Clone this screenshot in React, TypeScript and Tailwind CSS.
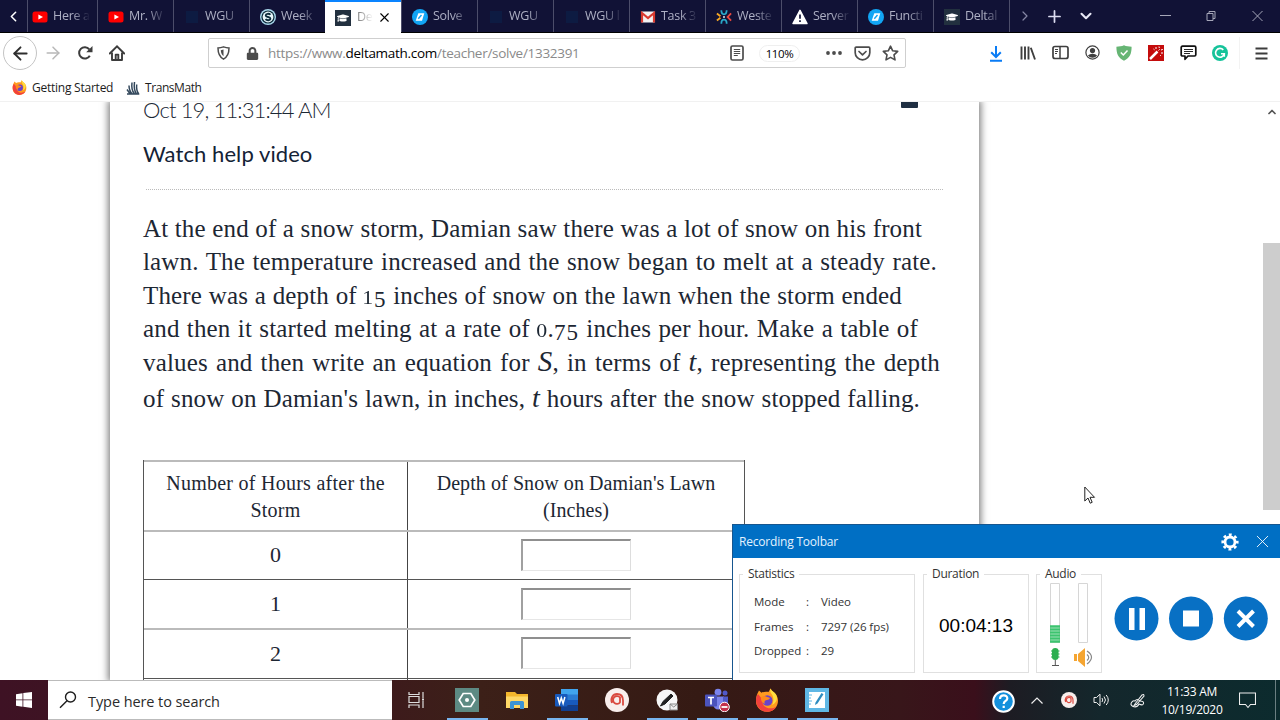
import React from 'react';
import { ArrowLeft, ArrowRight, ChevronDown, ChevronLeft, ChevronRight, ChevronUp, Plus, X } from 'lucide-react';
import { FaGraduationCap, FaLock } from 'react-icons/fa';

interface Tab {
  title: string;
  icon: string;
  active?: boolean;
}

const TABS: Tab[] = [
  { title: 'Here a', icon: 'youtube' },
  { title: 'Mr. W', icon: 'youtube' },
  { title: 'WGU', icon: 'wgu' },
  { title: 'Week', icon: 'schoology' },
  { title: 'De', icon: 'delta', active: true },
  { title: 'Solve', icon: 'nearpod' },
  { title: 'WGU', icon: 'wgu' },
  { title: 'WGU l', icon: 'wgu' },
  { title: 'Task 3', icon: 'gmail' },
  { title: 'Weste', icon: 'western' },
  { title: 'Server', icon: 'warn' },
  { title: 'Functi', icon: 'nearpod' },
  { title: 'Deltal', icon: 'delta' },
];

const TabIcon = ({ name }: { name: string }) => {
  switch (name) {
    case 'youtube':
      return (
        <svg width="16" height="16" viewBox="0 0 16 16">
          <rect x="0.5" y="2.5" width="15" height="11" rx="2.5" fill="#f00" />
          <path d="M6.4 5.4v5.2L11 8z" fill="#fff" />
        </svg>
      );
    case 'schoology':
      return (
        <svg width="16" height="16" viewBox="0 0 16 16">
          <circle cx="8" cy="8" r="8" fill="#a9d8ec" />
          <circle cx="8" cy="8" r="6.6" fill="#0b2a3a" />
          <circle cx="8" cy="8" r="5.4" fill="#e8f6fb" />
          <path d="M10.4 5.8C9.2 4.2 5.700 4.500 5.700 6.400c0 2.100 4.700 1.100 4.700 3.200 0 2.100-3.600 2.100-4.900.600" fill="none" stroke="#0b2a3a" strokeWidth="1.800" />
        </svg>
      );
    case 'nearpod':
      return (
        <svg width="16" height="16" viewBox="0 0 16 16">
          <circle cx="8" cy="8" r="8" fill="#12a5f4" />
          <path d="M6.300 4.300h6L10 11.700H3.700z" fill="#fff" />
          <path d="M6.300 9.700l3.200-3.600" stroke="#12a5f4" strokeWidth="1.500" />
        </svg>
      );
    case 'gmail':
      return (
        <svg width="16" height="16" viewBox="0 0 16 16">
          <rect x="1" y="2.500" width="14" height="11" rx="1" fill="#f4f2f2" />
          <path d="M2 13.500V4l6 5 6-5v9.500" fill="none" stroke="#d93a2f" strokeWidth="2.200" />
        </svg>
      );
    case 'western':
      return (
        <svg width="18" height="18" viewBox="0 0 18 18" fill="none" strokeWidth="2">
          <path d="M1 5l4 3.200M1 13l4-3.200" stroke="#f5a623" />
          <path d="M17 5l-4 4 4 4" stroke="#e8483f" />
          <path d="M6 1.500C6 4 7 6 9 6s3-2 3-4.500" stroke="#29a9c9" />
          <path d="M6 16.500C6 14 7 12 9 12s3 2 3 4.500" stroke="#29a9c9" />
          <circle cx="9" cy="9" r="1" fill="#fff" />
        </svg>
      );
    case 'warn':
      return (
        <svg width="16" height="16" viewBox="0 0 16 16">
          <path d="M8 1.300L15 14.500H1z" fill="#fff" stroke="#fff" strokeWidth="1.500" strokeLinejoin="round" />
          <path d="M8 5.500v4.300M8 11.300v1.700" stroke="#111236" strokeWidth="1.700" />
        </svg>
      );
    case 'delta':
      return (
        <span className="flex h-4 w-4 items-center justify-center bg-[#22303f] text-white">
          <FaGraduationCap size={12} />
        </span>
      );
    default:
      return <span className="h-3 w-3 bg-[#0d1b42]" />;
  }
};

const TabStrip = () => (
  <div className="flex h-[33px] border-b border-black bg-[#111236] text-[#aeb0c4]">
    <div className="flex w-[27px] items-center justify-center">
      <ChevronLeft size={17} strokeWidth={2.2} className="text-white" />
    </div>
    {TABS.map((tab, i) => (
      <div
        key={i}
        className={
          tab.active
            ? 'flex h-[33px] w-[76px] shrink-0 items-center border-t-2 border-[#0a84ff] bg-white pl-[10px] text-[#777]'
            : i === 0
              ? 'flex w-[70px] shrink-0 items-center border-l border-[#4c4d6a] pt-px pl-1'
              : 'flex w-[76px] shrink-0 items-center border-l border-[#4c4d6a] pt-px pl-[10px]'
        }
      >
        <span className="flex w-[16px] shrink-0 justify-center">
          <TabIcon name={tab.icon} />
        </span>
        <span
          className={
            tab.active
              ? 'ml-[6px] w-[16px] text-[12.500px] tracking-[-0.3px] whitespace-nowrap [mask-image:linear-gradient(to_right,black_0%,transparent_100%)]'
              : 'ml-[5px] w-[38px] text-[12.500px] tracking-[-0.3px] whitespace-nowrap [mask-image:linear-gradient(to_right,black_50%,transparent_98%)]'
          }
        >
          {tab.title}
        </span>
        {tab.active && <X size={15} strokeWidth={1.8} className="ml-[4px] text-black" />}
      </div>
    ))}
    <div className="flex w-[30px] items-center justify-center border-l border-[#4c4d6a]">
      <ChevronRight size={16} strokeWidth={1.8} className="text-[#8587a5]" />
    </div>
    <div className="flex w-[30px] items-center justify-center">
      <Plus size={19} strokeWidth={2.2} className="text-[#dcdcf0]" />
    </div>
    <div className="flex w-[34px] items-center justify-center">
      <ChevronDown size={18} strokeWidth={2.800} className="text-[#e8e8f6]" />
    </div>
    <div className="ml-auto flex items-center text-[#a6a7b9]">
      <svg width="138" height="32" fill="none" stroke="currentColor" strokeWidth="1">
        <path d="M18 15.500h11M65 13.500h6v7h-6zM67 13.500v-2h6v7h-2M110.500 11l10 10M120.500 11l-10 10" />
      </svg>
    </div>
  </div>
);

const ReloadIcon = () => (
  <svg width="16" height="16" viewBox="0 0 16 16" fill="none" stroke="#3c3c3c" strokeWidth="2">
    <path d="M12.800 10.700A5.700 5.700 0 1 1 12.300 4.300" />
    <path d="M15.500 1v6.300H9.200z" fill="#3c3c3c" stroke="none" />
  </svg>
);

const HomeIcon = () => (
  <svg width="16" height="16" viewBox="0 0 16 16" fill="none" stroke="#3c3c3c" strokeWidth="1.900">
    <path d="M0.800 8.500L8 1.400l7.200 7.100" strokeLinecap="round" />
    <path d="M3 7.500V15h10V7.500M6.700 15V9.600h2.600V15" strokeLinejoin="round" />
  </svg>
);

const NavBar = () => (
  <div className="flex h-10 items-center bg-white">
    <div className="ml-[3px] flex h-[34px] w-[34px] items-center justify-center rounded-full border border-[#c4c4c4]">
      <ArrowLeft size={21} strokeWidth={2.200} className="text-[#2e2e2e]" />
    </div>
    <div className="flex w-8 justify-center">
      <ArrowRight size={20} strokeWidth={1.800} className="text-[#b8b8b8]" />
    </div>
    <div className="flex w-8 justify-center"><ReloadIcon /></div>
    <div className="flex w-8 justify-center"><HomeIcon /></div>
    <div className="ml-[75px] flex h-[30px] w-[698px] shrink-0 items-center rounded-[2px] border border-[#cfcfcf]">
      <svg className="ml-[8px]" width="13" height="14" viewBox="0 0 13 14" fill="none" stroke="#4c4c4c">
        <path d="M6.500 0.900c2 .7 3.500 1 5.500 1.100 0 5.500-1.500 9-5.500 11.100C2.500 11 1 7.500 1 2c2-.1 3.500-.4 5.500-1.100z" strokeWidth="1.500" />
        <path d="M6.500 3.600v6.600C4.700 8.800 4 7 3.800 4.200z" fill="#4c4c4c" stroke="none" />
      </svg>
      <FaLock size={13} className="ml-[16px] text-[#4c4c4c]" />
      <span className="ml-[9px] w-[322px] text-[13.500px] tracking-[-0.290px] whitespace-nowrap text-[#8a8a8a]">
        https://www.<span className="text-black">deltamath.com</span>/teacher/solve/1332391
      </span>
      <svg className="ml-auto" width="14" height="16" viewBox="0 0 14 16" fill="none" stroke="#4c4c4c">
        <rect x="1" y="1" width="12" height="14" rx="1.500" strokeWidth="1.700" />
        <path d="M3.800 4.500h6.400M3.800 6.500h6.400M3.800 8.500h6.400M3.800 10.500h4" />
      </svg>
      <span className="ml-[15px] flex h-[17px] w-[41px] items-center justify-center rounded-full border border-[#efefef] pt-px text-[11.500px] tracking-[-0.4px] text-black">
        110%
      </span>
      <svg className="ml-[25px]" width="18" height="6" fill="#4c4c4c">
        <circle cx="3" cy="3" r="1.900" />
        <circle cx="9" cy="3" r="1.900" />
        <circle cx="15" cy="3" r="1.900" />
      </svg>
      <svg className="ml-[11px]" width="17" height="15" viewBox="0 0 17 15" fill="none" stroke="#4c4c4c" strokeWidth="1.700">
        <path d="M1.200 2.200q0-1 1-1h12.600q1 0 1 1v4.500a7.300 7.100 0 0 1-14.600 0z" />
        <path d="M5 5.500l3.500 3.300L12 5.500" strokeLinecap="round" strokeLinejoin="round" />
      </svg>
      <svg className="mr-[6px] ml-[11px]" width="17" height="16" viewBox="0 0 17 16" fill="none" stroke="#4c4c4c" strokeWidth="1.600">
        <path d="M8.500 1.200l2.200 4.600 5 .6-3.700 3.500 1 5-4.500-2.500L4 14.900l1-5L1.300 6.400l5-.6z" strokeLinejoin="round" />
      </svg>
    </div>
    <div className="ml-[74px] flex pt-px">
      <div className="flex w-8 justify-center">
        <svg width="14" height="17" viewBox="0 0 14 17" fill="none" stroke="#0a7cf5" strokeWidth="2">
          <path d="M7 1v11M2.200 7.200L7 12l4.800-4.800M1 15.800h12" />
        </svg>
      </div>
      <div className="flex w-8 justify-center">
        <svg width="16" height="16" viewBox="0 0 16 16" fill="none" stroke="#3f3f3f" strokeWidth="1.900">
          <path d="M1.500 1.500v13M5 1.500v13M8.500 1.500v13M10.800 2.800l4.200 11.700" />
        </svg>
      </div>
      <div className="flex w-8 justify-center">
        <svg width="17" height="15" viewBox="0 0 17 14" fill="none" stroke="#3f3f3f">
          <rect x="1" y="1" width="15" height="12" rx="2" strokeWidth="1.700" />
          <path d="M8 1v12" strokeWidth="1.500" />
          <path d="M3 4h3M3 6h3M3 8h2" />
        </svg>
      </div>
      <div className="flex w-8 justify-center">
        <svg width="15" height="15" viewBox="0 0 15 15">
          <circle cx="7.500" cy="7.500" r="6.600" fill="none" stroke="#3f3f3f" strokeWidth="1.200" />
          <circle cx="7.500" cy="5.600" r="2.600" fill="#3f3f3f" />
          <path d="M2.900 10.600Q4.500 8.700 7.500 8.700t4.600 1.900Q10.300 12.800 7.500 12.800T2.900 10.600z" fill="#3f3f3f" />
        </svg>
      </div>
      <div className="flex w-8 justify-center">
        <svg width="16" height="16" viewBox="0 0 16 16">
          <path d="M8 0.300c2.300 1 4.800 1.400 7.600 1.500C15.600 8.500 14 13 8 15.800 2 13 .4 8.500.4 1.800 3.200 1.700 5.700 1.300 8 .3z" fill="#66b574" />
          <path d="M4.800 7.500l2.500 2.500 4.200-4.500" fill="none" stroke="#fff" strokeWidth="1.500" />
        </svg>
      </div>
      <div className="flex w-8 justify-center">
        <svg width="16" height="16" viewBox="0 0 16 16">
          <rect width="16" height="16" fill="#c40c0c" />
          <path d="M2 14L9.500 6.500" stroke="#fff" strokeWidth="2.500" />
          <path d="M10.500 5.500l1.200-1.200M8 2v2M13 8h2M11 1.500l.3 1.500M13 5l1.800-.6M5.500 4l1 .8M12 10l.8.800" stroke="#fff" />
        </svg>
      </div>
      <div className="flex w-8 justify-center">
        <svg width="17" height="16" viewBox="0 0 17 16" fill="none" stroke="#111">
          <path d="M2.500 1.200h12q1.300 0 1.300 1.300v7.200q0 1.300-1.300 1.300H8l-3 3.300V11H2.500q-1.300 0-1.300-1.300V2.500q0-1.300 1.300-1.300z" strokeWidth="1.700" strokeLinejoin="round" />
          <path d="M4 4.500h9M4 6.500h9M4 8.500h6" strokeWidth="0.900" />
        </svg>
      </div>
      <div className="flex w-8 justify-center">
        <svg width="16" height="16" viewBox="0 0 16 16" fill="none" stroke="#fff" strokeWidth="1.600">
          <circle cx="8" cy="8" r="8" fill="#15c39a" stroke="none" />
          <path d="M11.300 4.900A4.400 4.400 0 1 0 12.300 8.700H9M12.300 8.700v3" />
        </svg>
      </div>
    </div>
    <div className="ml-[3px] h-8 w-px bg-[#f3f3f3]" />
    <svg className="ml-[15px] shrink-0" width="13" height="13" stroke="#3c3c3c" strokeWidth="1.900">
      <path d="M0.500 1.500h12M0.500 6.500h12M0.500 11.500h12" />
    </svg>
  </div>
);

const Bookmarks = () => (
  <div className="flex h-[29px] items-center border-b border-[#f1f1f1] bg-white pt-px text-[12px] tracking-[-0.240px] text-[#1c1c1c]">
    <span className="ml-[12px]"><FirefoxIcon size={15} /></span>
    <span className="ml-[5px] w-[81px] whitespace-nowrap">Getting Started</span>
    <svg className="ml-[13px]" width="14" height="14" viewBox="0 0 14 14" fill="none" stroke="#33485c" strokeWidth="1.500">
      <path d="M1 8.500L4.300 13M3 4.500Q3 10 6.500 13M6 1.500Q5 9 8.500 13M8.500 1Q7.500 9 10.500 13M10.700 3.500Q10 9.500 12.800 13M1 13h12.300" />
    </svg>
    <span className="ml-[5px] tracking-[-0.430px] whitespace-nowrap">TransMath</span>
  </div>
);

const FirefoxIcon = ({ size }: { size: number }) => (
  <svg width={size} height={size} viewBox="0 0 24 24">
    <path d="M2.500 5.500L4 2.500l2.500 2.300C9 3.300 12 3.500 13.500 4L15.500.5c1 2.500 4 4 5.500 6 2 3 2.500 6 1.500 9.500C21 21 17 23.800 12 23.800 6 23.800 1 19.500 1 13c0-3 .5-5.500 1.500-7.500z" fill="#ff9a1f" />
    <path d="M1 12c0 7 5 11.800 11 11.800 4 0 7.500-1.800 9.500-5.300-3 2-7 2.500-10 1C8 18 7 15 8 12L3 6c-1.500 2-2 4-2 6z" fill="#f2413c" />
    <path d="M15.500.5c-1 3 .5 4.500 2 7 1.500 3 1 7-.5 9.500 4-2 6.500-6 4-10.500-1.500-2.500-4.500-3.500-5.500-6z" fill="#ffde3f" />
    <circle cx="12.300" cy="12.500" r="5.200" fill="#6a43c9" />
    <path d="M6 9c2-1.500 4-1.500 6 0 1.500.5 2.500.5 3 1-1 2-3 2-4 2.300-1.500.5-2 2-1 3.700-3-1-4.500-4-4-7z" fill="#ff8a1c" />
  </svg>
);

// old-style figures for running text
const Low = ({ children }: { children: string }) => <span className="inline-block translate-y-[3px] text-[23px] leading-none tracking-[1px]">{children}</span>;
const Short = ({ children }: { children: string }) => <span className="inline-block scale-x-115 text-[19px] leading-none tracking-[1px]">{children}</span>;

const Problem = () => (
  <div className="mt-[22px] text-[25px] leading-[33.3px] tracking-[0.150px] whitespace-nowrap text-[#1d2733] [text-align-last:justify]">
    <p className="w-[779px]">At the end of a snow storm, Damian saw there was a lot of snow on his front</p>
    <p className="w-[794px]">lawn. The temperature increased and the snow began to melt at a steady rate.</p>
    <p className="h-[33px] w-[759px]">
      There was a depth of <span><Short>1</Short><Low>5</Low></span> inches of snow on the lawn when the storm ended
    </p>
    <p className="h-[34px] w-[775px]">
      and then it started melting at a rate of <span><Short>0</Short>.<Low>7</Low><Low>5</Low></span> inches per hour. Make a table of
    </p>
    <p className="h-[35px] w-[797px]">
      values and then write an equation for <i className="text-[29px] leading-none">S</i>, in terms of <i className="text-[28px] leading-none">t</i>, representing the depth
    </p>
    <p className="h-[34px] w-[777px] pt-px">
      of snow on Damian's lawn, in inches, <i className="text-[28px] leading-none">t</i> hours after the snow stopped falling.
    </p>
  </div>
);

const ROWS = [0, 1, 2];

const DataTable = () => (
  <div className="mt-[45px] w-[602px] border-x border-[#555] text-[20px] leading-[27px] text-[#1d2733]">
    <div className="flex h-[70px] border-t-2 border-[#bbb] text-center whitespace-nowrap">
      <div className="w-[264px] border-r border-[#444] pt-[8px] tracking-[0.260px]">
        <div>Number of Hours after the</div>
        <div>Storm</div>
      </div>
      <div className="flex-1 pt-[8px] tracking-[0.080px]">
        <div>Depth of Snow on Damian's Lawn</div>
        <div>(Inches)</div>
      </div>
    </div>
    {ROWS.map((n) => (
      <div key={n} className={n === 1 ? 'flex h-[49px] border-t border-[#555]' : n === 2 ? 'flex h-[50px] border-t-2 border-[#bbb]' : 'flex h-[49px] border-t-2 border-[#bbb]'}>
        <div className="flex w-[264px] items-center justify-center border-r border-[#444] pb-px text-[22px]">{n}</div>
        <div className="flex-1 pt-[7px]">
          <div className={n === 1 ? 'mt-px ml-[113px] h-[32px] w-[110px] border-t-2 border-r border-b border-l-2 border-t-[#8f8f8f] border-r-[#ddd] border-b-[#e6e6e6] border-l-[#a0a0a0]' : 'ml-[113px] h-[32px] w-[110px] border-t-2 border-r border-b border-l-2 border-t-[#8f8f8f] border-r-[#ddd] border-b-[#e6e6e6] border-l-[#a0a0a0]'} />
        </div>
      </div>
    ))}
    <div className="flex h-[10px] border-t border-[#555]">
      <div className="w-[264px] border-r border-[#444]" />
    </div>
  </div>
);

const GroupBox = ({ title, className, children }: { title: string; className: string; children: React.ReactNode }) => (
  <fieldset className={`h-[106px] shrink-0 border border-[#e0e0e0] ${className}`}>
    <legend className="ml-[3px] h-[14px] px-[5px] text-[12px] leading-[14px] tracking-[-0.300px] whitespace-nowrap text-[#333]">{title}</legend>
    {children}
  </fieldset>
);

const STATS = [
  ['Mode', 'Video'],
  ['Frames', '7297 (26 fps)'],
  ['Dropped', '29'],
];

const RecordingToolbar = () => (
  <div className="absolute right-0 bottom-10 h-[156px] w-[548px] border-t border-l border-[#17568f] bg-white font-['Open_Sans',sans-serif]">
    <div className="flex h-[33px] items-center bg-[#006fc4] text-white">
      <span className="ml-[6px] pt-px text-[12px] tracking-[-0.200px] text-[#e4f3ff]">Recording Toolbar</span>
      <svg className="ml-auto" width="18" height="18" viewBox="0 0 18 18" fill="none" stroke="#fff">
        <circle cx="9" cy="9" r="5" strokeWidth="2.800" />
        <circle cx="9" cy="9" r="7.300" strokeWidth="2.600" strokeDasharray="2.870 2.864" strokeDashoffset="1.430" />
      </svg>
      <X size={21} strokeWidth={1} className="mr-[7px] ml-[13px]" />
    </div>
    <div className="flex pt-[9px]">
      <GroupBox title="Statistics" className="ml-[6px] w-[176px]">
        <div className="pt-[9px] pl-[14px] text-[11.500px] leading-[24.600px] tracking-[-0.050px] text-[#333]">
          {STATS.map(([label, value]) => (
            <div key={label} className="flex whitespace-nowrap">
              <span className="w-[52px]">{label}</span>
              <span className="w-[15px]">:</span>
              <span>{value}</span>
            </div>
          ))}
        </div>
      </GroupBox>
      <GroupBox title="Duration" className="ml-[8px] w-[106px]">
        <div className="pt-[33px] text-center font-['Liberation_Sans',sans-serif] text-[19px] leading-[24px] text-black">00:04:13</div>
      </GroupBox>
      <GroupBox title="Audio" className="ml-[7px] w-[66px]">
        <svg width="64" height="90" viewBox="0 0 64 90">
          <path d="M13.500 2.500h9v59h-9zM41.500 2.500h9v59h-9z" fill="#fff" stroke="#d6d6d6" />
          <path d="M13 45.500h10M13 48.500h10M13 51.500h10M13 54.500h10M13 57.500h10M13 60.500h10" stroke="#3cc46f" strokeWidth="2.300" />
          <rect x="15" y="67" width="6.500" height="12" rx="3.200" fill="#2cae50" />
          <path d="M14 70h8.500M14 73h8.500M14 76h8.500" stroke="#2cae50" />
          <path d="M18.300 79v5M15 84.500h7" stroke="#555" />
          <path d="M37 73h3v7h-3zM41 73l7-6v19l-7-6z" fill="#f5a531" />
          <path d="M50 73.500q3.500 3 0 6M50 70q9 6 0 13" fill="none" stroke="#888" strokeWidth="1.200" />
        </svg>
      </GroupBox>
      <svg width="158" height="47" viewBox="0 0 158 47" className="mt-[28px] ml-[11px]">
        <g fill="#0870c4">
          <circle cx="23.500" cy="23.500" r="22" />
          <circle cx="78" cy="23.500" r="22" />
          <circle cx="132.800" cy="23.500" r="22" />
        </g>
        <path d="M16 13h5.500v22H16zM26.500 13H32v22h-5.500zM70 15.500h16v16H70z" fill="#fff" />
        <path d="M125 16l15.500 15.500M140.500 16L125 31.500" stroke="#fff" strokeWidth="4" />
      </svg>
    </div>
  </div>
);

const Page = () => (
  <div className="flex h-[578px] overflow-hidden bg-white font-['Liberation_Serif',serif]">
    <div className="ml-[110px] w-[869px] bg-white pl-[33px] shadow-[0_0_7px_2px_rgba(0,0,0,0.5)]">
      <div className="flex h-[28px] justify-between font-['Lato',sans-serif] font-light text-[#1b2733]">
        <span className="mt-[-6px] text-[22px] leading-[28px] tracking-[-0.870px]">Oct 19, 11:31:44 AM</span>
        <span className="mr-[61px] h-[6px] w-[17px] rounded-b-[1px] bg-[#1f2f42]" />
      </div>
      <div className="mt-[9px] font-['Lato',sans-serif] text-[22px] leading-[30px] tracking-[0.080px] text-[#142235]">Watch help video</div>
      <div className="mt-[20px] ml-[3px] w-[797px] border-b border-dotted border-[#bbb]" />
      <Problem />
      <DataTable />
    </div>
    <div className="ml-auto flex w-[17px] flex-col items-center">
      <ChevronUp size={12} strokeWidth={3.500} className="mt-[4px] text-[#555]" />
      <div className="mt-[125px] h-[267px] w-[17px] bg-[#cdcdcd]" />
    </div>
  </div>
);

const AIcon = ({ size }: { size: number }) => (
  <svg width={size} height={size} viewBox="0 0 24 24">
    <circle cx="12" cy="12" r="12" fill="#f8eeec" />
    <path d="M15 9.500A3.900 3.900 0 1 0 15 14.500M7 15C5 10 8 6 12 6s6 2.500 6 6.500v5M15 8.800v6" fill="none" stroke="#d9493f" strokeWidth="1.800" />
  </svg>
);

const APPS = [
  {
    open: true,
    icon: (
      <svg width="24" height="24" viewBox="0 0 24 24">
        <rect width="24" height="24" fill="#5d8a83" />
        <path d="M8.200 5.500h7.600l4 6.500-4 6.500H8.200l-4-6.500z" fill="none" stroke="#fff" strokeWidth="1.700" />
        <circle cx="12" cy="12" r="2" fill="#fff" />
      </svg>
    ),
  },
  {
    open: false,
    icon: (
      <svg width="24" height="24" viewBox="0 0 24 24">
        <path d="M1 4h9l2 2h11v14H1z" fill="#f4b62c" />
        <path d="M1 8.500h22V20H1z" fill="#ffd866" />
        <path d="M5 21v-6.500q0-1.500 1.500-1.500h11q1.500 0 1.500 1.500V21h-4v-4H9v4z" fill="#3b93d4" />
      </svg>
    ),
  },
  {
    open: true,
    icon: (
      <svg width="24" height="24" viewBox="0 0 24 24">
        <path d="M6 1h17v6H6z" fill="#41a5ee" />
        <path d="M6 6.500h17V12H6z" fill="#2b7cd3" />
        <path d="M6 12h17v5.500H6z" fill="#185abd" />
        <path d="M6 17.500h17V23H6z" fill="#103f91" />
        <rect x="0" y="6" width="12.500" height="12.500" rx="1" fill="#185abd" />
        <path d="M2.700 9l1.800 6.500L6.300 10l1.800 5.500L9.900 9" fill="none" stroke="#fff" strokeWidth="1.500" />
      </svg>
    ),
  },
  { open: false, icon: <AIcon size={24} /> },
  {
    open: true,
    icon: (
      <svg width="24" height="24" viewBox="0 0 24 24">
        <circle cx="12" cy="12" r="10.500" fill="#f7f7f7" />
        <path d="M5.500 18L8 13.500l8-7.500 2 2-8 8z" fill="#222" stroke="#222" />
        <path d="M15 16h7.500v6H15z" fill="#eee" stroke="#888" />
        <path d="M15 16l3.700 3 3.800-3" fill="none" stroke="#888" />
      </svg>
    ),
  },
  {
    open: true,
    icon: (
      <svg width="26" height="24" viewBox="0 0 26 24">
        <circle cx="14" cy="4.200" r="3.400" fill="#7b83eb" />
        <circle cx="21" cy="5" r="2.500" fill="#5059c9" />
        <path d="M9 8.500h11V16a5.500 5.500 0 0 1-11 0z" fill="#7b83eb" />
        <path d="M19 8.500h5V16h-5z" fill="#5059c9" />
        <rect x="1" y="6.500" width="12" height="12" rx="1" fill="#4b53bc" />
        <path d="M4 9.500h6M7 9.500v7" stroke="#fff" strokeWidth="1.700" />
        <circle cx="20.500" cy="19" r="4.800" fill="#c4314b" stroke="#fff" />
        <path d="M17.500 19h6" stroke="#fff" strokeWidth="1.800" />
      </svg>
    ),
  },
  { open: true, icon: <FirefoxIcon size={24} /> },
  {
    open: true,
    icon: (
      <svg width="24" height="24" viewBox="0 0 24 24">
        <rect width="24" height="24" fill="#5fb7e5" />
        <path d="M4 4h16v16H4z" fill="#fff" />
        <path d="M4 7h3M4 10h2M4 13h3M4 16h2" stroke="#5fb7e5" />
        <path d="M10.500 14.500L16.500 5l2 1.200-6 9.300-2.500 1.500z" fill="#2d8cc0" />
      </svg>
    ),
  },
];

const Taskbar = () => (
  <div className="flex h-10 items-center bg-[linear-gradient(to_right,#3e1224_0,#3d1a1c_380px,#3c2018_480px,#351a14_700px,#38161a_900px,#3a0f1b_975px,#1d1c23_1010px,#14272c_1100px,#0c2b2e_1280px)] text-white">
    <div className="flex w-12 shrink-0 justify-center">
      <svg width="16" height="16" viewBox="0 0 16 16" fill="#fff">
        <path d="M0 2.300L6.500 1.200v6.300H0zM7.300 1.100L16 0v7.500H7.300zM0 8.300h6.500v6.400L0 13.700zM7.300 8.300H16V16l-8.700-1.200z" />
      </svg>
    </div>
    <div className="flex h-10 w-[344px] shrink-0 items-center border-t border-b border-[#bbb] bg-white text-[#2b2b2b]">
      <svg className="ml-[11px]" width="18" height="18" viewBox="0 0 18 18" fill="none" stroke="#1d1d1d" strokeWidth="1.400">
        <circle cx="11.500" cy="6" r="5" />
        <path d="M8 9.800L1 16.800" />
      </svg>
      <span className="ml-[11px] pt-[3px] text-[14.500px] tracking-[-0.080px] whitespace-nowrap">Type here to search</span>
    </div>
    <div className="flex w-[48px] shrink-0 justify-center">
      <svg width="17" height="16" viewBox="0 0 17 16" fill="none" stroke="#ddd" strokeWidth="1.200">
        <path d="M1 0v2.500h10V0M1 4.500h10v6H1zM1 16v-3h10v3M15 0v6M15 9v7" />
        <path d="M14 7.500h2" strokeWidth="2" />
      </svg>
    </div>
    <div className="ml-[2px] flex">
      {APPS.map((app, i) => (
        <div key={i} className="flex h-10 w-[50px] shrink-0 flex-col items-center">
          <div className="flex h-[38px] items-center pt-[2px]">{app.icon}</div>
          {app.open && <div className="h-[2px] w-[41px] bg-[#78b5ee]" />}
        </div>
      ))}
    </div>
    <div className="ml-auto flex items-center">
      <svg className="mt-[2px]" width="23" height="23" viewBox="0 0 23 23">
        <circle cx="11.500" cy="11.500" r="10.300" fill="#1490dc" stroke="#fff" strokeWidth="2" />
        <path d="M8 9c0-4.800 7.500-4.500 7.300-.5 0 2.500-3.600 2.500-3.600 5.500M11.700 15.700V18" fill="none" stroke="#fff" strokeWidth="2.200" />
      </svg>
      <svg className="ml-[16px]" width="12" height="7" fill="none" stroke="#eee" strokeWidth="1.200">
        <path d="M0.500 6.500L6 1l5.500 5.500" />
      </svg>
      <span className="ml-[18px]"><AIcon size={16} /></span>
      <svg className="ml-[16px]" width="17" height="14" viewBox="0 0 17 14" fill="none" stroke="#eee">
        <path d="M1 4.500h2.500L7 1.200v11.600L3.500 9.500H1zM9 5q1.500 2 0 4M11 3.500q3 3.500 0 7M13.200 2q4.200 5 0 10" />
      </svg>
      <svg className="ml-[20px]" width="15" height="15" viewBox="0 0 15 15" fill="none" stroke="#eee" strokeWidth="1.100">
        <path d="M5 11L12 2q2-1.500 2 1L6.500 11.500 4 12.500zM3 13.500Q0 12 1.500 9.500T5 8q2-3 5 0 4 0 3.500 2.500T9 11q-2 4-6 2.500" />
      </svg>
      <div className="ml-[11px] w-[72px] pt-[2px] text-center text-[12px] leading-[18px] tracking-[-0.250px] whitespace-nowrap">
        <div>11:33 AM</div>
        <div>10/19/2020</div>
      </div>
      <svg className="ml-[11px]" width="17" height="17" viewBox="0 0 17 17" fill="none" stroke="#eee" strokeWidth="1.100">
        <path d="M0.500 1h16v11.500h-5L9 15.500 6.500 12.500h-6z" />
      </svg>
      <div className="mr-[4px] ml-[19px] h-10 w-px bg-[#6b7f82]" />
    </div>
  </div>
);

export default function App() {
  return (
    <div className="relative flex h-[720px] w-[1280px] flex-col overflow-hidden bg-white font-['Open_Sans',sans-serif]">
      <TabStrip />
      <NavBar />
      <Bookmarks />
      <Page />
      <Taskbar />
      <RecordingToolbar />
      <svg className="absolute top-[486px] left-[1084px]" width="12" height="19" viewBox="0 0 12 19" fill="#fff" stroke="#222">
        <path d="M0.800 1v14l3.200-3 2.200 5.200 2-.9-2.200-5h4.500z" />
      </svg>
    </div>
  );
}
